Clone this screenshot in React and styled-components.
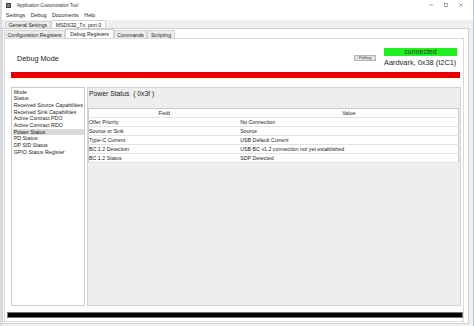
import React from 'react'
import styled, { createGlobalStyle } from 'styled-components'

const GlobalStyle = createGlobalStyle`
  html, body {
    margin: 0;
    padding: 0;
    background: #f0f0f0;
  }
  body {
    font-family: "Liberation Sans", Arial, sans-serif;
    color: #222;
  }
`

const Window = styled.div`
  width: 474px;
  height: 326px;
  box-sizing: border-box;
  display: flex;
  flex-direction: column;
  background: #f0f0f0;
  border-left: 2px solid #d5dbe4;
  border-right: 1px solid #b8c4d4;
  overflow: hidden;
`

const TitleBar = styled.div`
  height: 10px;
  flex: none;
  background: #fff;
  display: flex;
  align-items: center;
  padding: 0 5px 0 4px;
  font-size: 4.5px;
  color: #333;
`

const AppIcon = styled.span`
  width: 3px;
  height: 3px;
  border: 0.5px solid #444;
  background: #777;
  margin-right: 6px;
`

const Controls = styled.div`
  margin-left: auto;
  display: flex;
`

const Control = styled.span`
  width: 15px;
  display: flex;
  justify-content: center;
  align-items: center;
`

const MenuBar = styled.div`
  height: 10px;
  flex: none;
  background: #fff;
  display: flex;
  align-items: center;
  gap: 5.6px;
  padding-left: 4px;
  font-size: 5.3px;
  color: #222;
`

const TabBar = styled.div`
  height: ${p => p.$h}px;
  flex: none;
  display: flex;
  align-items: flex-end;
  padding-left: ${p => p.$pad}px;
`

const Tab = styled.div`
  box-sizing: border-box;
  height: ${p => (p.$active ? '100%' : 'calc(100% - 1px)')};
  display: flex;
  align-items: center;
  padding: 0 ${p => (p.$active ? 4 : 2.5)}px;
  font-size: 5.2px;
  color: #222;
  background: ${p => (p.$active ? '#fff' : '#ececec')};
  border: 0.8px solid #d4d4d4;
  border-bottom: none;
  white-space: nowrap;
`

const OuterPage = styled.div`
  flex: 1;
  min-height: 0;
  display: flex;
  flex-direction: column;
  background: #fff;
  border: 1px solid #cfcfcf;
  margin: 0 4px 2px 0;
`

const InnerPage = styled.div`
  flex: 1;
  min-height: 0;
  display: flex;
  flex-direction: column;
  background: #fff;
  border: 1px solid #d9d9d9;
  margin: 0 4px 1px 1px;
`

const Header = styled.div`
  display: flex;
  align-items: center;
  padding: 8.5px 6px 4px 12px;
`

const ModeTitle = styled.div`
  font-size: 7.3px;
  color: #222;
  margin-top: 1.5px;
`

const PollButton = styled.div`
  margin-left: auto;
  width: 22px;
  height: 6.4px;
  box-sizing: border-box;
  background: #e1e1e1;
  border: 0.6px solid #b4b4b4;
  font-size: 4.2px;
  color: #444;
  display: flex;
  align-items: center;
  justify-content: center;
`

const Status = styled.div`
  width: 73px;
  margin-left: 8px;
  display: flex;
  flex-direction: column;
`

const Connected = styled.div`
  height: 8.7px;
  background: #22f022;
  font-size: 7px;
  color: #1d3a1d;
  display: flex;
  align-items: center;
  justify-content: center;
`

const Adapter = styled.div`
  height: 12px;
  display: flex;
  align-items: center;
  font-size: 7.4px;
  color: #222;
  white-space: nowrap;
`

const Bar = styled.div`
  height: ${p => p.$h}px;
  flex: none;
  background: ${p => p.$color};
  margin: ${p => p.$m};
  box-sizing: border-box;
  border: ${p => p.$border || 'none'};
`

const Body = styled.div`
  flex: 1;
  min-height: 0;
  display: flex;
  margin: 9px 2.3px 0 6px;
`

const RegList = styled.div`
  width: 74px;
  flex: none;
  box-sizing: border-box;
  background: #fff;
  border: 1px solid #cbcbcb;
  padding: 0.5px 0.5px;
`

const RegItem = styled.div`
  height: 6.67px;
  line-height: 6.67px;
  padding-left: 1.2px;
  font-size: 5.3px;
  color: #222;
  white-space: nowrap;
  background: ${p => (p.$selected ? '#d9d9d9' : 'transparent')};
`

const Panel = styled.div`
  flex: 1;
  margin-left: 1.7px;
  background: #eeeeee;
  border: 1px solid #d3d3d3;
  display: flex;
  flex-direction: column;
`

const PanelTitle = styled.div`
  height: 20px;
  flex: none;
  padding: 1.5px 0 0 1.3px;
  box-sizing: border-box;
  font-size: 6.8px;
  color: #222;
`

const Table = styled.table`
  width: calc(100% - 1px);
  border-collapse: collapse;
  background: #fff;
  border: 1px solid #c9c9c9;
  font-size: 5.3px;
  color: #222;
  table-layout: fixed;
`

const HeadCell = styled.th`
  height: 8px;
  padding: 0;
  font-weight: normal;
  text-align: center;
  border-bottom: 1px solid #e2e2e2;
`

const Cell = styled.td`
  height: 8px;
  padding: 0 0 0 0.3px;
  text-align: left;
  white-space: nowrap;
  overflow: hidden;
  border-bottom: 1px solid #e2e2e2;
`

const registers = [
  'Mode',
  'Status',
  'Received Source Capabilities',
  'Received Sink Capabilities',
  'Active Contract PDO',
  'Active Contract RDO',
  'Power Status',
  'PD Status',
  'DP SID Status',
  'GPIO Status Register',
]

const fields = [
  ['Offer Priority', 'No Connection'],
  ['Source or Sink', 'Source'],
  ['Type-C Current', 'USB Default Current'],
  ['BC 1.2 Detection', 'USB BC v1.2 connection not yet established'],
  ['BC 1.2 Status', 'SDP Detected'],
]

function App() {
  return (
    <>
      <GlobalStyle />
      <Window>
        <TitleBar>
          <AppIcon />
          <span>Application Customization Tool</span>
          <Controls>
            <Control>
              <svg width="4" height="4" viewBox="0 0 4 4"><path d="M0 2h4" stroke="#555" strokeWidth="0.5" /></svg>
            </Control>
            <Control>
              <svg width="4" height="4" viewBox="0 0 4 4"><rect x="0.3" y="0.3" width="3.4" height="3.4" fill="none" stroke="#555" strokeWidth="0.5" /></svg>
            </Control>
            <Control>
              <svg width="4" height="4" viewBox="0 0 4 4"><path d="M0.2 0.2L3.8 3.8M3.8 0.2L0.2 3.8" stroke="#555" strokeWidth="0.5" /></svg>
            </Control>
          </Controls>
        </TitleBar>
        <MenuBar>
          <span>Settings</span>
          <span>Debug</span>
          <span>Documents</span>
          <span>Help</span>
        </MenuBar>
        <TabBar $h={8} $pad={3}>
          <Tab>General Settings</Tab>
          <Tab $active>MSDS32_Tx, port 0</Tab>
        </TabBar>
        <OuterPage>
          <TabBar $h={9} $pad={1}>
            <Tab>Configuration Registers</Tab>
            <Tab $active>Debug Registers</Tab>
            <Tab>Commands</Tab>
            <Tab>Scripting</Tab>
          </TabBar>
          <InnerPage>
            <Header>
              <ModeTitle>Debug Mode</ModeTitle>
              <PollButton>Polling</PollButton>
              <Status>
                <Connected>connected</Connected>
                <Adapter>Aardvark, 0x38 (I2C1)</Adapter>
              </Status>
            </Header>
            <Bar $h={6} $color="#e00000" $m="0 3px 0 6px" />
            <Body>
              <RegList>
                {registers.map(r => (
                  <RegItem key={r} $selected={r === 'Power Status'}>{r}</RegItem>
                ))}
              </RegList>
              <Panel>
                <PanelTitle>Power Status&nbsp; ( 0x3f )</PanelTitle>
                <Table>
                  <colgroup>
                    <col style={{ width: '41%' }} />
                    <col />
                  </colgroup>
                  <thead>
                    <tr>
                      <HeadCell>Field</HeadCell>
                      <HeadCell>Value</HeadCell>
                    </tr>
                  </thead>
                  <tbody>
                    {fields.map(([f, v]) => (
                      <tr key={f}>
                        <Cell>{f}</Cell>
                        <Cell>{v}</Cell>
                      </tr>
                    ))}
                  </tbody>
                </Table>
              </Panel>
            </Body>
            <Bar $h={6} $color="#000" $m="5.7px 0 3.5px 2.3px" $border="0.6px solid #777" />
          </InnerPage>
        </OuterPage>
      </Window>
    </>
  )
}

export default App
